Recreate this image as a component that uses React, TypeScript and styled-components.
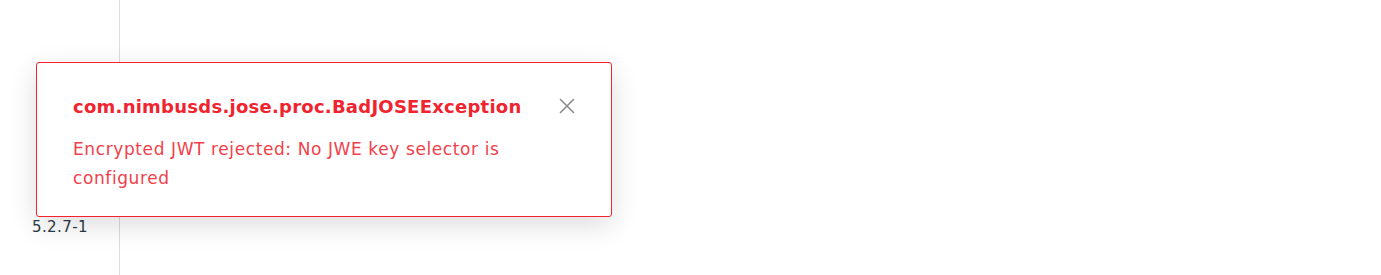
import React from 'react'
import styled, { createGlobalStyle } from 'styled-components'

const GlobalStyle = createGlobalStyle`
  html, body {
    margin: 0;
    padding: 0;
    background: #fff;
    font-family: 'DejaVu Sans', 'Open Sans', sans-serif;
  }
`

const Page = styled.div`
  position: relative;
  width: 1381px;
  height: 275px;
  overflow: hidden;
  display: grid;
  grid-template-columns: 119px 1px 1fr;
`

const Sidebar = styled.div`
  display: flex;
  flex-direction: column;
  justify-content: flex-end;
  padding: 0 0 38px 32px;
`

const Version = styled.div`
  font-size: 15px;
  letter-spacing: 0.4px;
  color: #2d3a48;
  line-height: 20px;
`

const Divider = styled.div`
  background: #dcdcdc;
`

const Toast = styled.div`
  position: absolute;
  left: 36px;
  top: 62px;
  width: 576px;
  height: 155px;
  box-sizing: border-box;
  background: #fff;
  border: 1px solid #f5222d;
  border-radius: 3px;
  box-shadow: 0 8px 28px rgba(0, 0, 0, 0.14);
  padding: 29px 36px 0 36px;
`

const Header = styled.div`
  display: flex;
  align-items: flex-start;
  justify-content: space-between;
`

const Title = styled.div`
  font-size: 18px;
  font-weight: 700;
  letter-spacing: 0.25px;
  color: #f0242f;
  line-height: 30px;
`

const Close = styled.button`
  border: 0;
  background: none;
  padding: 0;
  margin-top: 6px;
  width: 16px;
  height: 16px;
  display: flex;
  cursor: pointer;
`

const Message = styled.div`
  margin-top: 13px;
  font-size: 17px;
  letter-spacing: 0.6px;
  color: #f2404a;
  line-height: 29px;
  max-width: 450px;
`

export default function App() {
  return (
    <>
      <GlobalStyle />
      <Page>
        <Sidebar>
          <Version>5.2.7-1</Version>
        </Sidebar>
        <Divider />
        <div />
        <Toast>
          <Header>
            <Title>com.nimbusds.jose.proc.BadJOSEException</Title>
            <Close aria-label="close">
              <svg width="16" height="16" viewBox="0 0 16 16">
                <path d="M1 1 L15 15 M15 1 L1 15" stroke="#8c8c8c" strokeWidth="1.6" />
              </svg>
            </Close>
          </Header>
          <Message>Encrypted JWT rejected: No JWE key selector is configured</Message>
        </Toast>
      </Page>
    </>
  )
}
